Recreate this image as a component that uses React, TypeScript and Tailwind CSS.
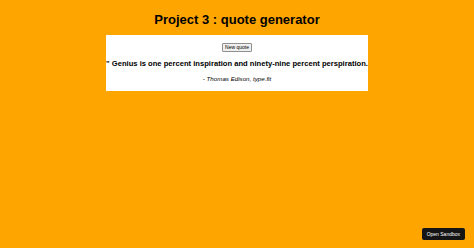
export default function App() {
  return (
    <div className="relative h-[248px] w-[474px] overflow-hidden bg-[#ffa500] font-['Liberation_Sans',Arial,sans-serif] text-black">
      <div className="flex flex-col items-center">
        <h1 className="mt-[11px] text-[13px] font-bold leading-[17px]">Project 3 : quote generator</h1>
        <div className="mt-[7px] flex w-[262px] flex-col items-center bg-white pb-[8px] pt-[8px]">
          <button className="rounded-[1px] border border-[#8f8f8f] bg-[#efefef] px-[2px] text-[5px] leading-[7px]">
            New quote
          </button>
          <p className="mt-[7px] whitespace-nowrap text-[7.6px] font-bold leading-[10px]">
            " Genius is one percent inspiration and ninety-nine percent perspiration.
          </p>
          <p className="mt-[6px] text-[6.2px] italic leading-[8px]">- Thomas Edison, type.fit</p>
        </div>
      </div>
      <button className="absolute bottom-[8px] right-[9px] rounded-[2px] bg-[#151515] px-[5px] py-[3px] text-[5px] leading-[6px] text-white">
        Open Sandbox
      </button>
    </div>
  )
}
